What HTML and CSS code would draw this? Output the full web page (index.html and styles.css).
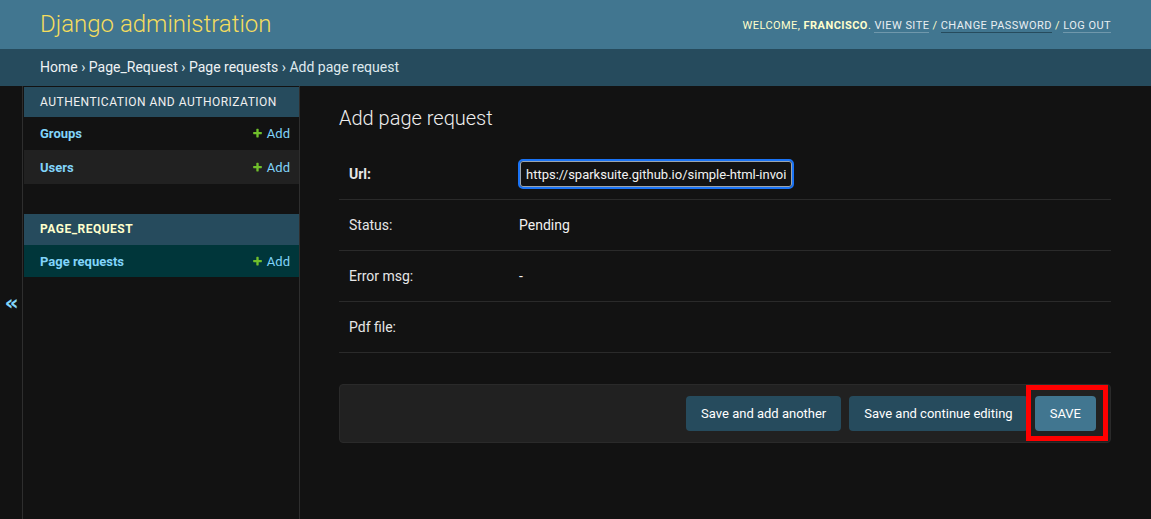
FILE: index.html
```html
<!DOCTYPE html>
<html lang="en">
<head>
    <meta charset="UTF-8">
    <title>Add page request | Django site admin</title>
    <link rel="stylesheet" href="styles.css">
</head>
<body>
    <header class="header">
        <div class="branding">Django administration</div>
        <div class="user-tools">
            Welcome, <strong>Francisco</strong>.
            <a href="#">View site</a> /
            <a href="#" class="hovered">Change password</a> /
            <a href="#">Log out</a>
        </div>
    </header>

    <nav class="breadcrumbs">
        <a href="#">Home</a> &rsaquo; <a href="#">Page_Request</a> &rsaquo; <a href="#">Page requests</a> &rsaquo; Add page request
    </nav>

    <div class="main">
        <button class="toggle-nav">&laquo;</button>

        <aside class="sidebar">
            <div class="app-module">
                <div class="caption">Authentication and Authorization</div>
                <div class="model-row">
                    <a href="#" class="model-link">Groups</a>
                    <a href="#" class="add-link"><svg viewBox="0 0 1792 1792"><path d="M1600 736v192q0 40-28 68t-68 28h-416v416q0 40-28 68t-68 28h-192q-40 0-68-28t-28-68v-416h-416q-40 0-68-28t-28-68v-192q0-40 28-68t68-28h416v-416q0-40 28-68t68-28h192q40 0 68 28t28 68v416h416q40 0 68 28t28 68z"/></svg>Add</a>
                </div>
                <div class="model-row alt">
                    <a href="#" class="model-link">Users</a>
                    <a href="#" class="add-link"><svg viewBox="0 0 1792 1792"><path d="M1600 736v192q0 40-28 68t-68 28h-416v416q0 40-28 68t-68 28h-192q-40 0-68-28t-28-68v-416h-416q-40 0-68-28t-28-68v-192q0-40 28-68t68-28h416v-416q0-40 28-68t68-28h192q40 0 68 28t28 68v416h416q40 0 68 28t28 68z"/></svg>Add</a>
                </div>
            </div>

            <div class="app-module">
                <div class="caption current">Page_Request</div>
                <div class="model-row selected">
                    <a href="#" class="model-link">Page requests</a>
                    <a href="#" class="add-link"><svg viewBox="0 0 1792 1792"><path d="M1600 736v192q0 40-28 68t-68 28h-416v416q0 40-28 68t-68 28h-192q-40 0-68-28t-28-68v-416h-416q-40 0-68-28t-28-68v-192q0-40 28-68t68-28h416v-416q0-40 28-68t68-28h192q40 0 68 28t28 68v416h416q40 0 68 28t28 68z"/></svg>Add</a>
                </div>
            </div>
        </aside>

        <main class="content">
            <h1>Add page request</h1>

            <form>
                <fieldset class="fields">
                    <div class="form-row">
                        <label class="required">Url:</label>
                        <input type="text" class="url-input" value="https://sparksuite.github.io/simple-html-invoice/">
                    </div>
                    <div class="form-row">
                        <label>Status:</label>
                        <div class="readonly">Pending</div>
                    </div>
                    <div class="form-row">
                        <label>Error msg:</label>
                        <div class="readonly">-</div>
                    </div>
                    <div class="form-row">
                        <label>Pdf file:</label>
                        <div class="readonly"></div>
                    </div>
                </fieldset>

                <div class="submit-row">
                    <button type="button" class="btn">Save and add another</button>
                    <button type="button" class="btn">Save and continue editing</button>
                    <span class="save-wrap">
                        <button type="button" class="btn default">SAVE</button>
                        <span class="highlight"></span>
                    </span>
                </div>
            </form>
        </main>
    </div>
</body>
</html>
```

FILE: styles.css
```css
* {
    box-sizing: border-box;
}

body {
    margin: 0;
    background-color: #121212;
    color: #eeeeee;
    font-family: Roboto, 'Liberation Sans', sans-serif;
    font-size: 14px;
}

a {
    text-decoration: none;
}

/* Header */
.header {
    height: 49px;
    background-color: #417690;
    padding: 0 40px;
    display: flex;
    align-items: center;
    justify-content: space-between;
}

.branding {
    font-size: 24px;
    font-weight: 300;
    color: #f5dd5d;
    margin-top: -1px;
}

.user-tools {
    font-size: 11px;
    letter-spacing: 0.45px;
    text-transform: uppercase;
    color: #ffffcc;
    margin-top: 2px;
}

.user-tools strong {
    font-weight: 700;
}

.user-tools a {
    color: #e8eef2;
    border-bottom: 1px solid rgba(255, 255, 255, 0.25);
}

.user-tools a.hovered {
    border-bottom-color: #264b5d;
}

/* Breadcrumbs */
.breadcrumbs {
    height: 37px;
    line-height: 37px;
    background-color: #264b5d;
    padding: 0 40px;
    color: #dfe9ee;
    font-size: 14px;
}

.breadcrumbs a {
    color: #eef2f4;
}

/* Layout */
.main {
    display: flex;
    min-height: calc(100vh - 86px);
}

.toggle-nav {
    width: 23px;
    flex-shrink: 0;
    background: none;
    border: none;
    border-right: 1px solid #2e2e2e;
    color: #81d4fa;
    font-size: 22px;
    font-weight: 700;
    padding: 0 0 0 1px;
    display: flex;
    align-items: center;
    justify-content: center;
    font-family: 'DejaVu Sans', sans-serif;
}

.sidebar {
    width: 277px;
    flex-shrink: 0;
    border-right: 1px solid #2e2e2e;
    padding: 1px 0 0 1px;
}

.app-module {
    margin-bottom: 30px;
}

.caption {
    background-color: #264b5d;
    color: #f0f0f0;
    font-size: 12px;
    letter-spacing: 0.5px;
    text-transform: uppercase;
    padding: 0 16px;
    height: 30px;
    line-height: 30px;
}

.caption.current {
    color: #ffffcc;
    font-weight: 700;
    height: 31px;
    line-height: 31px;
}

.model-row {
    height: 33px;
    display: flex;
    align-items: center;
    justify-content: space-between;
    padding: 0 9px 0 16px;
    font-size: 13px;
}

.model-row.alt {
    background-color: #212121;
    height: 34px;
}

.model-row.selected {
    background-color: #00363a;
    height: 32px;
}

.model-link {
    color: #81d4fa;
    font-weight: 700;
}

.add-link {
    color: #81d4fa;
    display: flex;
    align-items: center;
}

.add-link svg {
    width: 11px;
    height: 11px;
    fill: #70bf2b;
    margin-right: 4px;
}

/* Content */
.content {
    flex: 1;
    padding: 20px 40px 20px 39px;
}

h1 {
    margin: 0 0 19px;
    font-size: 20px;
    font-weight: 300;
    line-height: 24px;
    color: #eeeeee;
}

.fields {
    margin: 0 0 31px;
    padding: 0;
    border: none;
}

.form-row {
    display: flex;
    align-items: center;
    padding: 10px;
    min-height: 51px;
    border-bottom: 1px solid #2a2a2a;
}

.form-row label {
    width: 170px;
    padding-right: 10px;
    color: #e6e6e6;
    font-size: 14px;
}

.form-row label.required {
    font-weight: 700;
}

.readonly {
    font-size: 14px;
    color: #f0f0f0;
}

.url-input {
    width: 276px;
    height: 30px;
    margin-left: -1px;
    padding: 0 6px;
    background-color: #121212;
    color: #f2f2f2;
    font-family: Roboto, 'Liberation Sans', sans-serif;
    font-size: 13px;
    border: 2px solid #1a73f5;
    border-radius: 5px;
    box-shadow: inset 0 0 0 1px #9aa4ae;
    outline: none;
}

/* Submit row */
.submit-row {
    display: flex;
    justify-content: flex-end;
    align-items: center;
    gap: 8px;
    padding: 11px 14px 11px 13px;
    background-color: #212121;
    border: 1px solid #2a2a2a;
    border-radius: 4px;
}

.btn {
    height: 35px;
    padding: 0 15px;
    border: none;
    border-radius: 4px;
    background-color: #264b5d;
    color: #ffffff;
    font-family: Roboto, 'Liberation Sans', sans-serif;
    font-size: 13px;
    cursor: pointer;
}

.btn.default {
    background-color: #417690;
}

.save-wrap {
    position: relative;
    display: flex;
    margin-left: -1px;
}

.highlight {
    position: absolute;
    top: -11px;
    bottom: -10px;
    left: -9px;
    right: -12px;
    border: 5px solid #ff0000;
    pointer-events: none;
}
```
